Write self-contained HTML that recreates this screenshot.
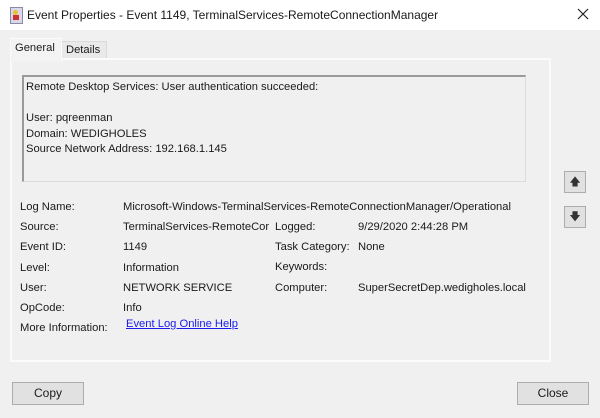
<!DOCTYPE html>
<html><head><style>
body{margin:0;width:600px;height:418px;background:#f0f0f0;font-family:"Liberation Sans",sans-serif;font-size:11.2px;color:#1a1a1a;position:relative;overflow:hidden}
.a{position:absolute;white-space:nowrap}
.btn{position:absolute;background:#e1e1e1;border:1px solid #adadad;text-align:center;line-height:21px;font-size:12px}
</style></head><body>
<div class="a" style="left:0;top:0;width:600px;height:30px;background:#fff"></div>
<div class="a" style="left:10px;top:7px;width:11px;height:15px;background:#d8d8e8;border:1px solid #8a8aa8"></div>
<div class="a" style="left:13px;top:10px;width:5px;height:5px;background:#e8c030;border-radius:50%"></div>
<div class="a" style="left:13px;top:15px;width:6px;height:5px;background:#d03030"></div>
<div class="a" style="left:27px;top:8px;font-size:12px">Event Properties - Event 1149, TerminalServices-RemoteConnectionManager</div>
<svg class="a" style="left:577px;top:8px" width="12" height="12"><path d="M1 1L11 11M11 1L1 11" stroke="#222" stroke-width="1.2"/></svg>
<div class="a" style="left:60px;top:41px;width:45px;height:18px;background:#e9e9e9;border:1px solid #dadada;border-bottom:none"></div>
<div class="a" style="left:66px;top:44px">Details</div>
<div class="a" style="left:10px;top:58px;width:537px;height:300px;background:#f0f0f0;border:2px solid #fbfbfb"></div>
<div class="a" style="left:10px;top:38px;width:50px;height:23px;background:#f3f3f3;border:1px solid #fafafa;border-bottom:none"></div>
<div class="a" style="left:15px;top:42px">General</div>
<div class="a" style="left:22px;top:75px;width:501px;height:104px;border:1px solid #dcdcdc;border-top:2px solid #9a9a9a;border-left:2px solid #9a9a9a"></div>
<div class="a" style="left:26px;top:80px;line-height:15.5px">Remote Desktop Services: User authentication succeeded:<br><br>User: pqreenman<br>Domain: WEDIGHOLES<br>Source Network Address: 192.168.1.145</div>
<div class="a" style="left:20px;top:197px;line-height:20.2px">Log Name:<br>Source:<br>Event ID:<br>Level:<br>User:<br>OpCode:<br>More Information:</div>
<div class="a" style="left:123px;top:197px;line-height:20.2px">Microsoft-Windows-TerminalServices-RemoteConnectionManager/Operational<br>TerminalServices-RemoteCor<br>1149<br>Information<br>NETWORK SERVICE<br>Info</div>
<div class="a" style="left:126px;top:318px;color:#1a1aee;text-decoration:underline">Event Log Online Help</div>
<div class="a" style="left:275px;top:217px;line-height:20.2px">Logged:<br>Task Category:<br>Keywords:<br>Computer:</div>
<div class="a" style="left:358px;top:217px;line-height:20.2px">9/29/2020 2:44:28 PM<br>None<br><br>SuperSecretDep.wedigholes.local</div>
<div class="btn" style="left:564px;top:171px;width:20px;height:20px;line-height:20px;font-size:11px;color:#333">🡅</div>
<div class="btn" style="left:564px;top:206px;width:20px;height:20px;line-height:20px;font-size:11px;color:#333">🡇</div>
<div class="btn" style="left:12px;top:382px;width:70px;height:21px">Copy</div>
<div class="btn" style="left:517px;top:382px;width:70px;height:21px">Close</div>
</body></html>
